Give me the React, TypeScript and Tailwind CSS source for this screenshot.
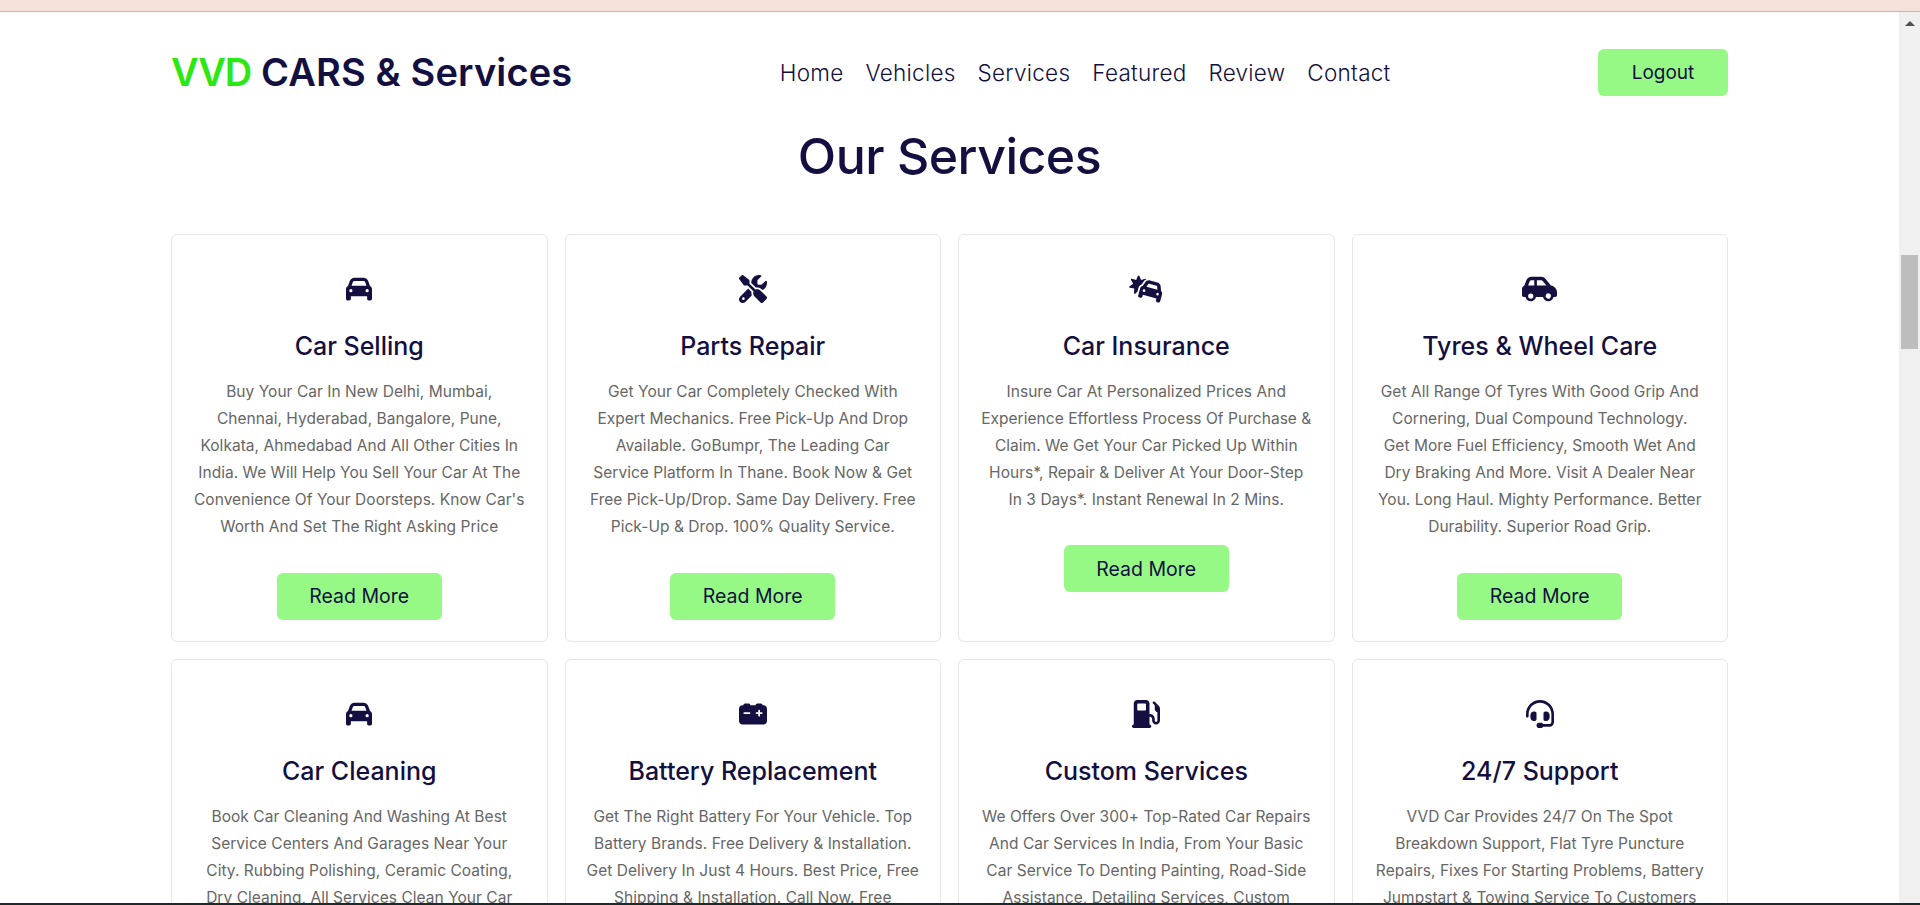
import { FaCar, FaCarBattery, FaCarBurst, FaCarSide, FaGasPump, FaHeadset, FaScrewdriverWrench } from "react-icons/fa6";
import type { IconType } from "react-icons";

type Service = { title: string; icon: IconType; iconClass: string; lines: string[] };

const services: Service[] = [
  {
    title: "Car Selling",
    icon: FaCar,
    iconClass: "w-[26px]",
    lines: [
      "Buy Your Car In New Delhi, Mumbai,",
      "Chennai, Hyderabad, Bangalore, Pune,",
      "Kolkata, Ahmedabad And All Other Cities In",
      "India. We Will Help You Sell Your Car At The",
      "Convenience Of Your Doorsteps. Know Car's",
      "Worth And Set The Right Asking Price",
    ],
  },
  {
    title: "Parts Repair",
    icon: FaScrewdriverWrench,
    iconClass: "w-[28px]",
    lines: [
      "Get Your Car Completely Checked With",
      "Expert Mechanics. Free Pick-Up And Drop",
      "Available. GoBumpr, The Leading Car",
      "Service Platform In Thane. Book Now & Get",
      "Free Pick-Up/Drop. Same Day Delivery. Free",
      "Pick-Up & Drop. 100% Quality Service.",
    ],
  },
  {
    title: "Car Insurance",
    icon: FaCarBurst,
    iconClass: "w-[35px]",
    lines: [
      "Insure Car At Personalized Prices And",
      "Experience Effortless Process Of Purchase &",
      "Claim. We Get Your Car Picked Up Within",
      "Hours*, Repair & Deliver At Your Door-Step",
      "In 3 Days*. Instant Renewal In 2 Mins.",
    ],
  },
  {
    title: "Tyres & Wheel Care",
    icon: FaCarSide,
    iconClass: "w-[35px]",
    lines: [
      "Get All Range Of Tyres With Good Grip And",
      "Cornering, Dual Compound Technology.",
      "Get More Fuel Efficiency, Smooth Wet And",
      "Dry Braking And More. Visit A Dealer Near",
      "You. Long Haul. Mighty Performance. Better",
      "Durability. Superior Road Grip.",
    ],
  },
  {
    title: "Car Cleaning",
    icon: FaCar,
    iconClass: "w-[26px]",
    lines: [
      "Book Car Cleaning And Washing At Best",
      "Service Centers And Garages Near Your",
      "City. Rubbing Polishing, Ceramic Coating,",
      "Dry Cleaning, All Services Clean Your Car",
    ],
  },
  {
    title: "Battery Replacement",
    icon: FaCarBattery,
    iconClass: "w-[28px]",
    lines: [
      "Get The Right Battery For Your Vehicle. Top",
      "Battery Brands. Free Delivery & Installation.",
      "Get Delivery In Just 4 Hours. Best Price, Free",
      "Shipping & Installation. Call Now. Free",
    ],
  },
  {
    title: "Custom Services",
    icon: FaGasPump,
    iconClass: "w-[28px]",
    lines: [
      "We Offers Over 300+ Top-Rated Car Repairs",
      "And Car Services In India, From Your Basic",
      "Car Service To Denting Painting, Road-Side",
      "Assistance, Detailing Services, Custom",
    ],
  },
  {
    title: "24/7 Support",
    icon: FaHeadset,
    iconClass: "w-[28px]",
    lines: [
      "VVD Car Provides 24/7 On The Spot",
      "Breakdown Support, Flat Tyre Puncture",
      "Repairs, Fixes For Starting Problems, Battery",
      "Jumpstart & Towing Service To Customers",
    ],
  },
];

const navLinks = ["Home", "Vehicles", "Services", "Featured", "Review", "Contact"];

function ServiceCard({ service }: { service: Service }) {
  const Icon = service.icon;
  return (
    <div className="flex flex-col items-center rounded-md border border-[#e6e6e6] px-3 pt-[40px] pb-[21px] text-center">
      <Icon className={`h-[28px] text-[#130f40] ${service.iconClass}`} />
      <h3 className="mt-[25px] text-[25px] leading-[36px] font-medium text-[#130f40]">{service.title}</h3>
      <p className="mt-[14px] text-[15.5px] leading-[27.1px] tracking-[0.04px] text-[#666]">
        {service.lines.map((line) => (
          <span key={line} className="block whitespace-nowrap">
            {line}
          </span>
        ))}
      </p>
      <a className="mt-[32px] flex h-[47px] w-[165px] items-center justify-center rounded-md bg-[#96f986] pt-[1px] text-[19.5px] text-[#130f40]">
        Read More
      </a>
    </div>
  );
}

export default function App() {
  return (
    <div className="flex h-[905px] flex-col overflow-hidden bg-white font-[Inter,sans-serif]">
      <div className="h-[12px] shrink-0 border-b border-[#c9b5ae] bg-[#f5e1da]" />
      <div className="flex min-h-0 flex-1">
        <main className="min-w-0 flex-1 overflow-hidden pr-[171px] pl-[171px]">
          <header className="flex h-[100px] items-center justify-between pt-[21px]">
            <div className="text-[38px] font-semibold tracking-[0.15px] text-[#130f40]">
              <span className="tracking-[-1px] text-[#2ce811]">VVD</span> CARS &amp; Services
            </div>
            <nav className="flex gap-[22px] text-[22.5px] font-light tracking-[0.25px] text-[#130f40]">
              {navLinks.map((link) => (
                <a key={link}>{link}</a>
              ))}
            </nav>
            <a className="flex h-[47px] w-[130px] items-center justify-center rounded-md bg-[#96f986] pt-[1px] text-[19px] text-[#130f40]">
              Logout
            </a>
          </header>
          <h1 className="mt-[12px] text-center text-[50px] leading-[64px] font-medium tracking-[-0.5px] text-[#130f40]">Our Services</h1>
          <div className="mt-[46px] grid grid-cols-4 gap-x-[17px] gap-y-[17px]">
            {services.map((service) => (
              <ServiceCard key={service.title} service={service} />
            ))}
          </div>
        </main>
        <div className="flex w-[21px] shrink-0 flex-col items-center bg-[#f0f0f0] pt-[9px]">
          <div className="h-0 w-0 border-x-[5px] border-b-[5px] border-x-transparent border-b-[#505050]" />
          <div className="mt-[229px] h-[94px] w-[17px] bg-[#bdbdbd]" />
        </div>
      </div>
      <div className="h-[2px] shrink-0 bg-[#1b2b2b]" />
    </div>
  );
}
